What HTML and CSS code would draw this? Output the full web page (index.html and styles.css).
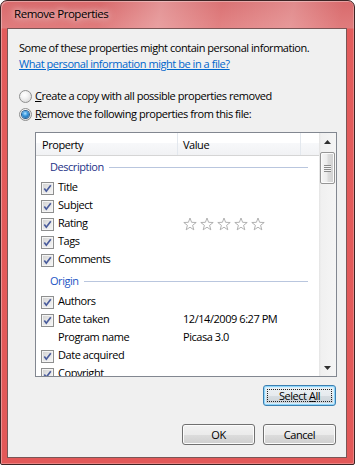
FILE: index.html
```html
<!DOCTYPE html>
<html lang="en">
<head>
  <meta charset="UTF-8">
  <title>Remove Properties</title>
  <link rel="stylesheet" href="styles.css">
</head>
<body>
  <div class="window">
    <div class="titlebar"><span class="title">Remove Properties</span></div>

    <div class="client">
      <p class="intro">Some of these properties might contain personal information.</p>
      <a class="help-link" href="#">What personal information might be in a file?</a>

      <div class="options">
        <label class="radio"><span class="radio-dot"></span><span><u>C</u>reate a copy with all possible properties removed</span></label>
        <label class="radio checked"><span class="radio-dot"></span><span><u>R</u>emove the following properties from this file:</span></label>
      </div>

      <div class="listbox">
        <div class="list-main">
          <div class="list-header">
            <div class="col col-prop">Property</div>
            <div class="col col-value">Value</div>
            <div class="col col-rest"></div>
          </div>
          <div class="list-body">
            <div class="group group-desc"><span>Description</span><span class="group-line"></span></div>
            <div class="row"><span class="prop"><span class="check on"></span>Title</span><span class="value"></span></div>
            <div class="row"><span class="prop"><span class="check on"></span>Subject</span><span class="value"></span></div>
            <div class="row">
              <span class="prop"><span class="check on"></span>Rating</span>
              <span class="value stars">
                <svg viewBox="0 0 14 14"><path d="M7 1L8.6 5.3L13.2 5.5L9.6 8.3L10.8 12.8L7 10.2L3.2 12.8L4.4 8.3L0.8 5.5L5.4 5.3Z"/></svg>
                <svg viewBox="0 0 14 14"><path d="M7 1L8.6 5.3L13.2 5.5L9.6 8.3L10.8 12.8L7 10.2L3.2 12.8L4.4 8.3L0.8 5.5L5.4 5.3Z"/></svg>
                <svg viewBox="0 0 14 14"><path d="M7 1L8.6 5.3L13.2 5.5L9.6 8.3L10.8 12.8L7 10.2L3.2 12.8L4.4 8.3L0.8 5.5L5.4 5.3Z"/></svg>
                <svg viewBox="0 0 14 14"><path d="M7 1L8.6 5.3L13.2 5.5L9.6 8.3L10.8 12.8L7 10.2L3.2 12.8L4.4 8.3L0.8 5.5L5.4 5.3Z"/></svg>
                <svg viewBox="0 0 14 14"><path d="M7 1L8.6 5.3L13.2 5.5L9.6 8.3L10.8 12.8L7 10.2L3.2 12.8L4.4 8.3L0.8 5.5L5.4 5.3Z"/></svg>
              </span>
            </div>
            <div class="row"><span class="prop"><span class="check on"></span>Tags</span><span class="value"></span></div>
            <div class="row"><span class="prop"><span class="check on"></span>Comments</span><span class="value"></span></div>

            <div class="group group-origin"><span>Origin</span><span class="group-line"></span></div>
            <div class="row"><span class="prop"><span class="check on"></span>Authors</span><span class="value"></span></div>
            <div class="row"><span class="prop"><span class="check on"></span>Date taken</span><span class="value">12/14/2009 6:27 PM</span></div>
            <div class="row"><span class="prop"><span class="check none"></span>Program name</span><span class="value">Picasa 3.0</span></div>
            <div class="row"><span class="prop"><span class="check on"></span>Date acquired</span><span class="value"></span></div>
            <div class="row"><span class="prop"><span class="check on"></span>Copyright</span><span class="value"></span></div>
          </div>
        </div>

        <div class="scrollbar">
          <div class="sb-btn">
            <svg viewBox="0 0 7 4"><path d="M3.5 0L7 4H0Z"/></svg>
          </div>
          <div class="sb-track">
            <div class="sb-thumb"><span class="grip"></span></div>
          </div>
          <div class="sb-btn">
            <svg viewBox="0 0 7 4"><path d="M0 0H7L3.5 4Z"/></svg>
          </div>
        </div>
      </div>

      <div class="select-row">
        <button class="btn btn-focus">Select <u>A</u>ll</button>
      </div>

      <div class="footer">
        <button class="btn">OK</button>
        <button class="btn">Cancel</button>
      </div>
    </div>
  </div>
</body>
</html>
```

FILE: styles.css
```css
* { box-sizing: border-box; margin: 0; padding: 0; }
html, body { width: 355px; height: 465px; overflow: hidden; }
body {
  font-family: "Open Sans", "Liberation Sans", sans-serif;
  font-size: 11px;
  letter-spacing: -0.45px;
  line-height: 15px;
  color: #000;
  background: #fff;
}

/* window frame */
.window {
  width: 355px;
  height: 465px;
  display: flex;
  flex-direction: column;
  border: 1px solid #3d2424;
  border-radius: 7px 7px 2px 2px;
  padding: 0 7px 6px 6px;
  background:
    linear-gradient(100deg, rgba(255,255,255,0) 0, rgba(255,255,255,0) 28%, rgba(255,255,255,.28) 45%, rgba(255,255,255,.05) 62%, rgba(255,255,255,.22) 82%, rgba(255,255,255,0) 96%) top / 100% 28px no-repeat,
    linear-gradient(to bottom, #d86a6c 0, #e07c7d 27px, #e35c5c 28px, #e25858 100%);
  box-shadow: inset 1px 1px 0 rgba(255,255,255,.35), inset -1px -1px 0 rgba(255,255,255,.25);
}
.titlebar {
  height: 27px;
  padding: 5px 0 0 7px;
  flex: none;
}
.title {
  font-size: 11.5px;
  text-shadow: 0 0 6px rgba(255,255,255,.8), 0 0 10px rgba(255,255,255,.6);
}

.client {
  flex: 1;
  border: 1px solid #7a5656;
  background: #f0f0f0;
  display: flex;
  flex-direction: column;
}

.intro { padding: 11px 0 0 11px; }
.help-link {
  margin: 1px 0 0 11px;
  color: #0066cc;
  text-decoration: underline;
  align-self: flex-start;
}

/* radio options */
.options {
  margin-top: 16px;
  padding-left: 11px;
  display: flex;
  flex-direction: column;
}
.radio {
  height: 18px;
  line-height: 18px;
  display: flex;
  align-items: center;
  gap: 3px;
}
.radio u, .btn u { text-decoration: underline; }
.radio-dot {
  width: 13px;
  height: 13px;
  border-radius: 50%;
  border: 1px solid #8e8f8f;
  background: radial-gradient(circle at 40% 35%, #ffffff 0, #f4f4f4 35%, #d0d0d0 100%);
  flex: none;
  position: relative;
}
.radio.checked .radio-dot::after {
  content: "";
  position: absolute;
  left: 2px;
  top: 2px;
  width: 7px;
  height: 7px;
  border-radius: 50%;
  background: radial-gradient(circle at 45% 35%, #b6e4ff 0, #3b9ae1 40%, #0d4f8c 100%);
  box-shadow: 0 0 0 1px #2a5f92;
}

/* list view */
.listbox {
  margin: 9px 0 0 27px;
  width: 302px;
  height: 245px;
  border: 1px solid #828790;
  background: #fff;
  display: flex;
}
.list-main {
  width: 283px;
  display: flex;
  flex-direction: column;
  overflow: hidden;
}
.list-header {
  height: 23px;
  display: flex;
  flex: none;
  border-bottom: 1px solid #d5d5d5;
  background: linear-gradient(to bottom, #ffffff 0, #ffffff 45%, #f7f8fa 45%, #f1f2f4 100%);
}
.col {
  padding: 4px 0 0 6px;
  border-right: 1px solid #e3e8ee;
}
.col-prop { width: 142px; }
.col-value { width: 123px; padding-left: 5px; }
.col-rest { flex: 1; border-right: none; }

.list-body { flex: 1; overflow: hidden; }
.group {
  height: 22px;
  line-height: 22px;
  display: flex;
  align-items: center;
  gap: 5px;
  padding: 0 11px 0 14px;
  color: #1e3287;
}
.group-origin { margin-top: 2px; color: #2255c4; }
.group-line {
  flex: 1;
  height: 1px;
  background: #b9c6de;
  margin-top: 1px;
}
.row {
  height: 18px;
  line-height: 18px;
  display: flex;
  align-items: center;
  color: #000;
}
.prop {
  width: 142px;
  display: flex;
  align-items: center;
  gap: 4px;
  padding-left: 5px;
  flex: none;
}
.value { padding-left: 5px; }
.check {
  width: 13px;
  height: 13px;
  margin-top: 2px;
  flex: none;
}
.check.on {
  border: 1px solid #8e8f8f;
  background:
    url("data:image/svg+xml,%3Csvg xmlns='http://www.w3.org/2000/svg' viewBox='0 0 11 11'%3E%3Cpath d='M2.3 5.6L4.3 8.2L8.8 2.2' fill='none' stroke='%234a5c9c' stroke-width='1.7'/%3E%3C/svg%3E") center / 11px 11px no-repeat,
    linear-gradient(135deg, #cfcfcf 0, #e6e6e6 50%, #f6f6f6 100%);
  box-shadow: inset 0 0 0 1px #f4f4f4;
}
.stars { display: flex; gap: 3px; padding-top: 1px; }
.stars svg { width: 14px; height: 14px; }
.stars path { fill: #fff; stroke: #a9a9a9; stroke-width: 0.9; stroke-linejoin: round; }

/* scrollbar */
.scrollbar {
  width: 17px;
  display: flex;
  flex-direction: column;
  background: linear-gradient(to right, #e3e3e3 0, #f0f0f0 2px, #f5f5f5 100%);
}
.sb-btn {
  height: 17px;
  flex: none;
  display: flex;
  align-items: center;
  justify-content: center;
}
.sb-btn svg { width: 7px; height: 4px; }
.sb-btn path { fill: #2f2f2f; }
.sb-track { flex: 1; padding-top: 2px; }
.sb-thumb {
  margin: 0 1px;
  height: 32px;
  border: 1px solid #959595;
  border-radius: 2px;
  background: linear-gradient(to right, #f6f6f6 0, #ececec 45%, #dcdcdc 55%, #d0d0d0 100%);
  box-shadow: inset 0 0 0 1px #fbfbfb;
  display: flex;
  align-items: center;
  justify-content: center;
}
.grip {
  width: 7px;
  height: 7px;
  background: repeating-linear-gradient(to bottom, #8a8a8a 0, #8a8a8a 1px, #f4f4f4 1px, #f4f4f4 2px);
}

/* buttons */
.select-row {
  margin-top: 8px;
  padding-right: 10px;
  display: flex;
  justify-content: flex-end;
}
.footer {
  margin-top: 18px;
  padding-right: 10px;
  display: flex;
  justify-content: flex-end;
  gap: 8px;
}
.btn {
  width: 73px;
  height: 21px;
  font-family: inherit;
  font-size: 11px;
  letter-spacing: -0.45px;
  color: #000;
  border: 1px solid #707070;
  border-radius: 3px;
  background: linear-gradient(to bottom, #f2f2f2 0, #ebebeb 50%, #dddddd 50%, #cfcfcf 100%);
  box-shadow: inset 0 0 0 1px #fcfcfc;
  position: relative;
}
.btn-focus {
  border-color: #3c7fb1;
  box-shadow: inset 0 0 0 1px #8fd6fa, inset 0 0 0 2px #d7eefb;
  background: linear-gradient(to bottom, #eef2f5 0, #e6eaee 50%, #d7dde2 50%, #cad1d7 100%);
}
.btn-focus::after {
  content: "";
  position: absolute;
  left: 3px;
  top: 3px;
  right: 3px;
  bottom: 3px;
  border: 1px dotted #222;
}
```
